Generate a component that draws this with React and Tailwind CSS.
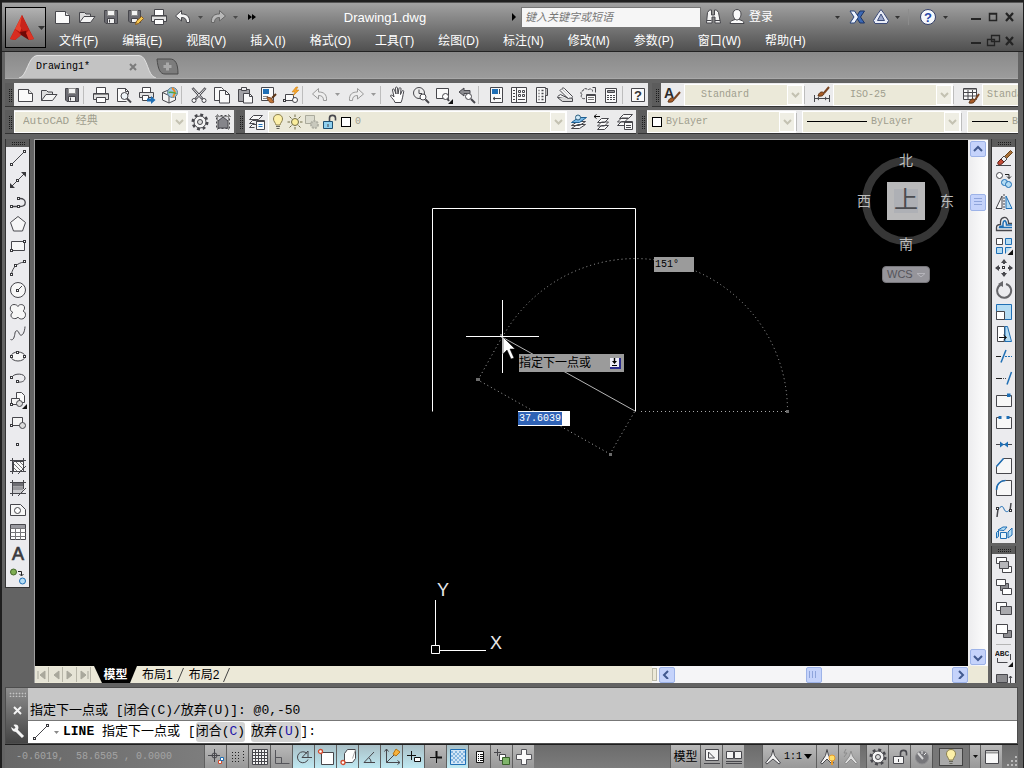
import React, { useState } from "react";

const ink = "#47474c";
const blue = "#1f6fb5";
const pale = "#b5dcf3";

// small square handle used on most draw icons
const Node = ({ x, y, fill = "#fff", stroke = "#38383c" }) => (
  <rect x={x - 1} y={y - 1} width="2" height="2" fill={fill} stroke={stroke} />
);

// every drawing lives in an 18 x 18 box
const drawings = {
  newFile: (
    <>
      <path d="M1.5 3.5h10l4 4v8h-14z" fill="#fafafa" />
      <path d="M11.5 3.5v4h4" fill="#ddd" />
    </>
  ),
  open: (
    <>
      <path d="M1.5 14.5v-10h5l1.5 1.5h4.5v2.5" fill="#ddd" />
      <path d="M1.5 14.5l4.5-6h11l-4.5 6z" fill="#f4f4f4" />
    </>
  ),
  save: (
    <>
      <path d="M2.5 2.5h13v13h-11.5l-1.5-1.5z" fill="#6c6c72" />
      <path d="M5.5 2.5h7v5h-7z" fill="#f4f4f4" stroke="#8d8d8d" />
      <path d="M5.5 10.5h7v5h-7z" fill="#f0f0f0" />
      <path d="M7.5 11.5v3" />
    </>
  ),
  saveAs: (
    <>
      <path d="M2.5 2.5h12v12h-10.5l-1.5-1.5z" fill="#6c6c72" />
      <path d="M5.5 2.5h6v5h-6z" fill="#f4f4f4" stroke="#8d8d8d" />
      <path d="M5.5 10.5h6v4h-6z" fill="#f0f0f0" />
      <path d="M9.5 16.5l1-3.5 5-4.5 2 2-5 5z" fill="#f3c64e" stroke="#8a5a1e" />
    </>
  ),
  print: (
    <>
      <path d="M4.5 7v-5.5h9v5.5" fill="#fff" />
      <path d="M1.5 7.5h15v6h-15z" fill="#e2e2e2" />
      <path d="M2 8.5h14" stroke="#888" />
      <path d="M4.5 11.5h9v5h-9z" fill="#fff" />
    </>
  ),
  preview: (
    <>
      <path d="M11.5 15.5h-9v-13h8l3 3v3" fill="#fafafa" />
      <path d="M10.5 2.5v3h3" />
      <circle cx="9.5" cy="10" r="3.5" fill="#eef3f7" />
      <path d="M12 12.5l4 4" strokeWidth="2" />
    </>
  ),
  publish: (
    <>
      <path d="M4.5 6v-4.5h8v4.5" fill="#fff" />
      <path d="M1.5 6.5h14v5h-14z" fill="#e2e2e2" />
      <path d="M4.5 9.5h6v5h-6z" fill="#fff" />
      <path d="M9 12.5h4v-2.5l4.5 4-4.5 4v-2.5h-4z" fill={blue} stroke="none" />
    </>
  ),
  print3d: (
    <>
      <path d="M1.5 6.5l6-2.5 7 3v7l-6.5 3-6.5-3z" fill="#f4f4f4" />
      <path d="M1.5 6.5l6.5 3v7.5" />
      <circle cx="11.5" cy="6.5" r="5" fill="#9cc8e6" stroke="#5f7f95" />
      <path d="M11 2c3 2 4 5 1 9" stroke="#f08a24" strokeWidth="2" />
      <path d="M7.5 6.5c3-1 5 0 8 1" stroke="#4fa548" strokeWidth="1.5" />
    </>
  ),
  cut: (
    <>
      <path d="M2.5 2l10 11M15.5 2l-10 11" strokeWidth="2.6" />
      <path d="M3 2.500l9 10M15 2.500l-9 10" stroke="#e6e6e8" />
      <circle cx="4" cy="14.5" r="2" fill="#fff" />
      <circle cx="14" cy="14.5" r="2" fill="#fff" />
    </>
  ),
  copy: (
    <>
      <path d="M1.5 1.5h7l2 2v11h-9z" fill="#fafafa" />
      <path d="M6.5 4.5h6l4 4v8.5h-10z" fill="#fafafa" />
      <path d="M12.5 4.5v4h4" />
    </>
  ),
  paste: (
    <>
      <path d="M2.5 3.5h11v12h-11z" fill="#a2a2a6" />
      <path d="M5.5 1.5h5v3h-5z" fill="#eee" />
      <path d="M7.5 7.5h6l3 3v6.5h-9z" fill="#fafafa" />
      <path d="M13.5 7.5v3h3" />
    </>
  ),
  match: (
    <>
      <path d="M2.5 1.5h12v13h-12z" fill="#fafafa" />
      <path d="M4 3h6v5h-6z" fill={blue} stroke="none" />
      <path d="M4 10.5h5M4 12.5h4" stroke="#888" />
      <path d="M8 11l4 1 3 4c-3 2-6 0-7-5z" fill="#c07434" stroke="#7a4420" />
      <path d="M13 12l4-4" stroke="#5b3315" strokeWidth="2" />
    </>
  ),
  block: (
    <>
      <path d="M3.5 8.5h8v6h-8z" fill="#fafafa" />
      <path d="M1 14.5h13" />
      <circle cx="13" cy="14" r="2.5" fill="#fff" />
      <path d="M14 1l-4 5h3l-2 4 6-6h-3l2-3z" fill="#f7a52a" stroke="#c77a10" strokeWidth=".5" />
      <Node x={2.5} y={14.5} />
    </>
  ),
  undo: <path d="M1.5 8l6-5.5v3.5c5 0 8.5 2 8 8.5h-3c0-3.5-1.5-5-5-5v3.5z" fill="#f6f6f6" />,
  redo: <path d="M16.5 8l-6-5.5v3.5c-5 0-8.5 2-8 8.5h3c0-3.5 1.5-5 5-5v3.5z" fill="#b9b9b9" stroke="#666" />,
  undoGrey: <path d="M1.5 8l6-5.5v3.5c5 0 8.5 2 8 8.5h-3c0-3.5-1.5-5-5-5v3.5z" fill="#eee" stroke="#9a9a9a" />,
  redoGrey: <path d="M16.5 8l-6-5.5v3.5c-5 0-8.5 2-8 8.5h3c0-3.5 1.5-5 5-5v3.5z" fill="#eee" stroke="#9a9a9a" />,
  pan: (
    <path
      d="M6 16.5c-1-3-3-4-4.5-6.5 0-1.5 2-1 3.5 1l-1.5-7c0-1.5 1.5-1.5 2 0l1.5 4-.5-6c0-1.3 1.800-1.3 2 0l.5 6 1-5.5c.3-1.2 2-1 2 .3l-.5 5.7 1.5-3.5c.7-1 2-.5 1.700.7-1 4-1 7-2.7 10.8z"
      fill="#fff"
    />
  ),
  zoomRt: (
    <>
      <circle cx="7" cy="7" r="5.5" fill="#eee" />
      <path d="M7 3.5v4h3" />
      <circle cx="11" cy="11" r="3" fill="#fff" />
      <path d="M13.5 13.5l3.5 3.5" strokeWidth="2" />
    </>
  ),
  zoomWin: (
    <>
      <path d="M1.5 2.5h12v10h-12z" fill="#fafafa" />
      <circle cx="10.5" cy="10.5" r="3" fill="#fff" />
      <path d="M12.5 13l1.5 2" strokeWidth="2" />
      <path d="M18 13v5h-5z" fill="#111" stroke="none" />
    </>
  ),
  zoomPrev: (
    <>
      <path d="M1 6l5-4v2.5h6v3h-6v2.5z" fill="#8c8c90" />
      <circle cx="10.5" cy="10.5" r="3" fill="#fff" />
      <path d="M13 13l4 4" strokeWidth="2" />
    </>
  ),
  props: (
    <>
      <path d="M3.5 1.5h12v15h-12z" fill="#fafafa" />
      <path d="M5 3h6v5h-6z" fill={blue} stroke="none" />
      <path d="M12.5 3v5M6 12.5h8M6 12.5l2-1.5M6 12.5l2 1.5" />
    </>
  ),
  center: (
    <>
      <path d="M1.5 1.5h15v15h-15zM6.5 1.5v15" fill="#fafafa" />
      <path d="M3 4.5h2M3 7.5h2M3 10.5h2M3 13.5h2" />
      <path d="M8.5 4.5h2v2h-2zM12.5 4.5h2v2h-2zM8.5 8.5h2v2h-2zM12.5 8.5h2v2h-2zM8 13.5h7" />
    </>
  ),
  palette: (
    <>
      <path d="M3.5 1.5h9v15h-9z" fill="#fafafa" />
      <path d="M12.5 2.5h2v7h-2" fill="#bbb" />
      <path d="M5.5 4.5h1M8.5 4.5h2M5.5 7.5h1M8.5 7.5h2M5.5 10.5h1M8.5 10.5h2M5.5 13.5h1M8.5 13.5h2" strokeWidth="1.5" />
    </>
  ),
  sheets: (
    <>
      <path d="M1.5 11.5l5 4h10v-3l-7-2z" fill="#d8d8d8" />
      <path d="M1.500 10.5l3-2 8 4 3-1L6 2.500l-2 2 8 8" fill="#f4f4f4" />
      <path d="M6 2.500c1-1 2-.5 2.500 0l8 8-1 2" fill="#f4f4f4" />
    </>
  ),
  markup: (
    <>
      <path d="M3 8.5c-2-1-1-4 1-3.5 0-3 4-3 5-1 2-2 5-1 4.5 1.5" strokeDasharray="3 1" />
      <path d="M3 8.5c-2 2 0 5 3 4" strokeDasharray="3 1" />
      <path d="M13.5 1.5h3v5" />
      <path d="M7.5 8.5h9v8h-9z" fill="#fafafa" />
      <path d="M9 11.5h6M9 13.5h6" stroke="#777" />
      <path d="M8 9.5h8" />
    </>
  ),
  calc: (
    <>
      <path d="M3.5 2.5h11v14h-11z" fill="#fafafa" />
      <path d="M5.5 4.5h7v2h-7z" fill="#9a9a9e" />
      <path d="M5 9.5h8M5 11.5h8M5 13.5h8" strokeDasharray="2 1" strokeWidth="1.2" />
    </>
  ),
  help: (
    <>
      <path d="M2.5 2.5h13v13h-13z" fill="#fafafa" />
      <text x="9" y="14" fontSize="13" fontWeight="700" textAnchor="middle" fill="#333" stroke="none" fontFamily="Liberation Sans, sans-serif">?</text>
    </>
  ),
  textStyle: (
    <>
      <text x="0" y="12" fontSize="14" fontWeight="700" fill="#2a2a2c" stroke="none" fontFamily="Liberation Sans, sans-serif">A</text>
      <path d="M4 16c1-4 4-5 6-3 0 3-3 3.5-6 3z" fill="#a65a26" stroke="#5b3315" />
      <path d="M10 13l6-7" stroke="#7a4420" strokeWidth="2" />
    </>
  ),
  dimStyle: (
    <>
      <path d="M1.5 9v7M16.5 9v7M2 12.5h14" />
      <path d="M4 12.5l2-2v4zM14 12.5l-2-2v4z" fill={ink} stroke="none" />
      <path d="M5 10c1-4 4-5 6-3 0 3-3 3.5-6 3z" fill="#a65a26" stroke="#5b3315" />
      <path d="M11 7l5-6" stroke="#7a4420" strokeWidth="2" />
    </>
  ),
  tableStyle: (
    <>
      <path d="M1.5 2.5h13v11h-13zM1.5 6.5h13M1.5 10h13M6 3v11M10.5 3v11" fill="#fafafa" />
      <path d="M2 3.5h12" stroke="#999" />
      <path d="M7 17c1-4 4-5 6-3 0 3-3 3.5-6 3z" fill="#a65a26" stroke="#5b3315" />
      <path d="M13 14l4-6" stroke="#7a4420" strokeWidth="2" />
    </>
  ),
  gear: (
    <>
      <circle cx="9" cy="9" r="7" strokeDasharray="2.8 2.7" strokeWidth="3" />
      <circle cx="9" cy="9" r="6" fill="#f4f4f4" />
      <circle cx="9" cy="9" r="2.5" fill="#dcdcdc" />
    </>
  ),
  space: (
    <>
      <path d="M2.5 2.5h13v13h-13z" fill="#d9d9dd" strokeDasharray="2 2" />
      <path d="M4 15v-7l5-4 5 4v7z" fill="#85858a" />
      <path d="M1 3.5h16M3.5 1v16M14.5 1v16" stroke="#8b8b8b" />
    </>
  ),
  layers: (
    <>
      <path d="M1.5 14.5h5M1.5 14.5l3-3h4M1.5 10.5h5M1.5 10.5l3-3h4M1.5 6.5h9l4-4h-9z" fill="#fafafa" />
      <path d="M8.5 7.5h8v9h-8z" fill="#fafafa" />
      <path d="M9 8.5h7" />
      <path d="M10.5 11.5h4M10.5 13.5h4" stroke={blue} />
    </>
  ),
  bulb: (
    <>
      <path d="M9 1.5c-3 0-4.5 2-4.5 4.5s2 3.5 2.5 6h4c.5-2.5 2.5-3.5 2.5-6s-1.5-4.5-4.5-4.5z" fill="#fdf0a8" stroke="#8c8150" />
      <path d="M7 13.5h4M7.5 15.5h3" stroke="#66665c" />
    </>
  ),
  sun: (
    <>
      <circle cx="9" cy="9" r="3.5" fill="#fbee9c" stroke="#6f6a44" />
      <path d="M9 1.5v2.5M9 14v2.5M1.5 9h2.5M14 9h2.5M3.5 3.5l2 2M12.5 12.5l2 2M14.5 3.5l-2 2M5.5 12.5l-2 2" stroke="#6f6a44" />
    </>
  ),
  freeze: (
    <>
      <path d="M2.5 2.5h9v8h-9z" fill="#dcdccf" stroke="#aaaa9c" />
      <circle cx="11.5" cy="11.5" r="3.5" fill="#c9c9bd" stroke="#b0b0a5" strokeDasharray="2 1" strokeWidth="2" />
    </>
  ),
  lockBlue: (
    <>
      <path d="M9.5 8v-3c0-3.5 6-3.5 6 0v2.5" strokeWidth="1.6" />
      <path d="M3.5 8.5h9v7h-9z" fill="#8fd0ee" stroke="#1d4f72" />
      <path d="M8 11v3" />
    </>
  ),
  lockOpen: (
    <>
      <path d="M9.5 8v-3c0-3.5 6-3.5 6 0v2.5" strokeWidth="1.6" />
      <path d="M2.5 8.5h10v7h-10z" fill="#f4f4f4" />
      <path d="M7.5 11v3" />
    </>
  ),
  layerIso: (
    <>
      <path d="M1.5 15.5h8l6-4h-8zM1.5 12.5h8l6-4h-8z" fill="#fafafa" />
      <path d="M1.5 9.5h8l7-5h-8z" fill="#7ab9e6" stroke="#1d5f93" />
      <circle cx="8" cy="4.5" r="2.5" fill="#cfe8f7" stroke="#2e5f80" />
    </>
  ),
  layerPrev: (
    <>
      <path d="M4.5 16.5h7l4-4h-7zM4.5 13h7l4-4h-7zM4.5 9.5h7l4-4h-7z" fill="#fafafa" />
      <path d="M1 3.5h6M1 3.5l2.5-2M1 3.5l2.5 2" stroke="#111" />
    </>
  ),
  layerState: (
    <>
      <path d="M1.5 12.5h7l4-4h-7zM1.5 9h7l4-4h-7zM3.5 5.5h9l4-4h-9z" fill="#fafafa" />
      <path d="M8.5 8.5h8v8h-8z" fill="#fafafa" />
      <path d="M9 9.5h7M10 12.5h5M10 14.5h5" />
    </>
  ),

  // draw palette
  line: (
    <>
      <path d="M3 15L15 3" />
      <Node x={2.5} y={15.5} />
      <Node x={15.5} y={2.5} />
    </>
  ),
  xline: (
    <>
      <path d="M2 16L16 2" />
      <path d="M1 17v-5l5 5zM17 1v5l-5-5z" fill="#38383c" stroke="none" />
      <Node x={8.5} y={9.5} />
    </>
  ),
  pline: (
    <>
      <path d="M2 13.5h9c7 0 7-8 0-8" strokeWidth="1.3" />
      <Node x={2.5} y={13.5} />
      <Node x={9.5} y={13.5} />
      <Node x={9.5} y={5.5} />
    </>
  ),
  polygon: <path d="M9 1.5l7.5 6-3 8.5h-9l-3-8.5z" fill="#f7f7f7" />,
  rectangle: (
    <>
      <path d="M2.5 4.5h13v9h-13z" fill="#f7f7f7" />
      <Node x={2.5} y={13.5} />
      <Node x={15.5} y={4.5} />
    </>
  ),
  arc: (
    <>
      <path d="M2.5 15c1-6 5-11 13-12" />
      <Node x={2.5} y={15.5} />
      <Node x={6.5} y={6.5} />
      <Node x={15.5} y={2.5} />
    </>
  ),
  circle: (
    <>
      <circle cx="9" cy="9" r="7.5" fill="#f7f7f7" />
      <path d="M9 9l4-4" />
      <Node x={8.5} y={9.5} />
    </>
  ),
  cloud: (
    <path
      d="M9 3.5c1-3 7-2.5 6.5 1.5 0 1.5-.5 2-1.5 3 4 1.5 3 8-1.5 8-2 0-3-1-3.5-2-2 3-7.5 1.5-7-2 .2-1.5 1-2 2-2.5-4-1.5-3.5-8 1-8 2 0 3.5 1 4 2z"
      fill="#f7f7f7"
    />
  ),
  spline: <path d="M1.5 14.5c3 1.500 4-3 4.5-6.500.5-3 3-3 4 0 1.5 4.500 5.500 2 6-6.500" />,
  ellipse: (
    <>
      <ellipse cx="9" cy="9.5" rx="7" ry="4.5" fill="#f7f7f7" />
      <Node x={2.5} y={9.5} />
      <Node x={15.5} y={9.5} />
      <Node x={8.5} y={5.5} />
    </>
  ),
  ellipseArc: (
    <>
      <path d="M3 8c2-4 13-4 13 1 0 3.5-4 4.5-7 4" />
      <Node x={2.5} y={8.5} />
      <Node x={8.5} y={12.5} />
    </>
  ),
  insert: (
    <>
      <path d="M7.5 1.5h5l3 3v7h-8z" fill="#fafafa" />
      <path d="M2.5 7.5h8v6h-8z" fill="#f4f4f4" />
      <circle cx="10.5" cy="12.5" r="3" fill="#ddd" />
      <Node x={2.5} y={13.5} />
      <path d="M18 13v5h-5z" fill="#111" stroke="none" />
    </>
  ),
  makeBlock: (
    <>
      <path d="M3.5 4.5h10v8h-10z" fill="#f4f4f4" />
      <circle cx="13.5" cy="12.5" r="3" fill="#ddd" />
      <Node x={2.5} y={12.5} />
    </>
  ),
  point: <Node x={8.5} y={9.5} />,
  hatch: (
    <>
      <path d="M4.5 4.5h10v10h-10z" fill="#fafafa" />
      <path d="M5 11l4 4M5 7l7 7M7 5l7 7M11 5l3 3" stroke="#777" />
      <path d="M1 3.5h16M3.5 1v16M1 14.5h16M14.5 1v9M9 17l8-8" />
    </>
  ),
  gradient: (
    <>
      <path d="M4 4h10v3.5h-10z" fill="#6e6e73" stroke="none" />
      <path d="M4 7.5h10v3.5h-10z" fill="#98989c" stroke="none" />
      <path d="M4 11h10v3.5h-10z" fill="#c9c9cc" stroke="none" />
      <path d="M1 3.5h16M3.5 1v16M1 14.5h16M14.5 1v9M9 17l8-8" />
    </>
  ),
  region: (
    <>
      <path d="M1.5 3.5h10l5 5v6h-15z" fill="#f7f7f7" />
      <circle cx="8.5" cy="9.5" r="3" fill="#fff" />
    </>
  ),
  table: (
    <>
      <path d="M1.5 1.5h15v15h-15z" fill="#fff" />
      <path d="M2 2h14v3h-14z" fill="#9a9aa0" stroke="none" />
      <path d="M1.5 5.5h15M1.5 9.5h15M1.5 13.5h15M6.5 5v12M11.5 5v12" stroke="#77777b" />
    </>
  ),
  mtext: (
    <text x="9" y="15" fontSize="18" textAnchor="middle" fill="#3a3a3e" stroke="#3a3a3e" strokeWidth=".7" fontFamily="Liberation Sans, sans-serif">A</text>
  ),
  addSelected: (
    <>
      <circle cx="4.5" cy="5" r="3" fill="#7fae52" stroke="#44652a" />
      <path d="M9 4.5h3.5v4M10.5 7l2 2 2-2" stroke="#222" />
      <circle cx="13.5" cy="14" r="3" fill={pale} stroke={blue} />
    </>
  ),

  // modify palette
  erase: (
    <>
      <path d="M1 16.5h15" />
      <path d="M9 8l6.500-6.500 2 2L11 10z" fill="#a9713a" stroke="#694318" />
      <path d="M6 10l3-3 3 3-3 3z" fill="#eee" />
      <path d="M3 13l3-3 3 3-3 2.500c-2 1-4 0-3-2.500z" fill="#c44b36" stroke="#5d2219" />
    </>
  ),
  copyObj: (
    <>
      <circle cx="4.5" cy="4.5" r="3" fill="#fff" />
      <path d="M10 3.5h4v4M12 5.5l2 2 2-2" stroke="#222" />
      <circle cx="9.5" cy="11.5" r="3" fill={pale} stroke={blue} />
      <circle cx="13.5" cy="13.5" r="3" fill={pale} stroke={blue} />
    </>
  ),
  mirror: (
    <>
      <path d="M7 3v12.5h-6z" fill="#f7f7f7" />
      <path d="M11 3v12.5h6z" fill={pale} stroke={blue} />
      <path d="M9 1v16" strokeDasharray="2 1" />
    </>
  ),
  offset: (
    <>
      <path d="M17 15.5h-15.5v-3c0-2 2-3 4-3-1-9 8-9 8-2v1h3.500" strokeWidth="1.3" />
      <path d="M17 12.5h-12.500c0-1 1-1.5 3.500-1.500-.5-7 3.500-6.500 3.500-1h5.500" stroke={blue} strokeWidth="1.5" />
    </>
  ),
  array: (
    <>
      <path d="M1.5 1.5h6v6h-6z" fill="#fff" />
      <path d="M10.5 1.5h6v6h-6zM1.5 10.5h6v6h-6zM10.5 16.5v-6h6" fill={pale} stroke={blue} />
      <path d="M18 12.5v5.500h-5.500z" fill="#111" stroke="none" />
    </>
  ),
  move: (
    <>
      <path d="M9 1v4M9 13v4M1 9h4M13 9h4" strokeWidth="2" />
      <path d="M9 0l3 4h-6zM9 18l3-4h-6zM0 9l4-3v6zM18 9l-4-3v6z" fill={ink} stroke="none" />
      <Node x={8.5} y={8.5} />
    </>
  ),
  rotate: (
    <>
      <path d="M6 3.500a7 7 0 1 0 5-.5" stroke="#66666a" strokeWidth="2" />
      <path d="M8 0v6l-5-3z" fill="#66666a" stroke="none" />
    </>
  ),
  scale: (
    <>
      <path d="M1.5 1.5h15v15h-15z" fill={pale} stroke={blue} />
      <path d="M1.5 8.5h8v8h-8z" fill="#fff" />
    </>
  ),
  stretch: (
    <>
      <path d="M2.5 1.5h7v15h-7z" fill="#fff" />
      <path d="M10 1.5h2.5l4 15h-6.5z" fill={pale} stroke={blue} />
      <path d="M4 12.5h7M8.5 10l3 2.5-3 2.5" stroke="#111" />
    </>
  ),
  trim: (
    <>
      <path d="M1 9.5h5" stroke="#222" />
      <path d="M6 15.5L11 3" stroke={blue} strokeWidth="1.5" />
      <path d="M10 9.5h7" stroke={blue} strokeDasharray="2 1" />
    </>
  ),
  extend: (
    <>
      <path d="M1 9.5h6" stroke="#222" />
      <path d="M8 9.5h4" strokeDasharray="1 1" />
      <path d="M12 15.5L16.5 3" stroke={blue} strokeWidth="1.5" />
    </>
  ),
  breakPoint: (
    <>
      <path d="M1.5 4.5v11h15v-11z" fill="#f7f7f7" />
      <path d="M12 2.5h3.5v3.5h-3.5z" fill={blue} stroke="none" />
    </>
  ),
  breakObj: (
    <>
      <path d="M4 4.5h-2.5v11h15v-11h-3" fill="#f7f7f7" />
      <path d="M3.5 3h3v3h-3zM11.5 3h3v3h-3z" fill={blue} stroke="none" />
    </>
  ),
  join: (
    <>
      <path d="M1 9.5h16" />
      <path d="M5 6.5l4 3-4 3zM13 6.5l-4 3 4 3z" fill={blue} stroke="none" />
    </>
  ),
  chamfer: (
    <>
      <path d="M8.5 1.5h8v15h-15v-7z" fill="#f7f7f7" />
      <path d="M1.5 9.5l7-8" stroke={blue} strokeWidth="1.5" />
    </>
  ),
  fillet: (
    <>
      <path d="M1.5 11c0-6 4-9.5 9-9.5h6v15h-15z" fill="#f7f7f7" />
      <path d="M1.5 11c0-6 4-9.5 9-9.5" stroke={blue} strokeWidth="1.5" />
    </>
  ),
  blend: (
    <>
      <path d="M2 16l1-8M16 2l-1 8" strokeWidth="1.5" />
      <path d="M3 9c3-5 5-4 6-1s4 4 6 0" stroke={blue} />
      <Node x={2.5} y={7.5} />
      <Node x={15.5} y={9.5} />
    </>
  ),
  explode: (
    <>
      <path d="M5.5 9.5h6v6h-6z" fill="#e6f4fc" stroke={blue} />
      <path d="M3 7l5-3h4l-3 3.5zM13 9l4-4v7l-4 3zM1.5 9.5l2-2v6l-2 1.5z" fill={pale} stroke={blue} />
    </>
  ),
  orderFront: (
    <>
      <path d="M1.5 1.5h10v6h-10zM7.5 10.5h9v6h-9z" fill="#fff" />
      <path d="M4.5 5.5h9v7h-9z" fill="#b6b6ba" />
    </>
  ),
  orderBack: (
    <>
      <path d="M5.5 5.5h8v7h-8z" fill="#8c8c90" />
      <path d="M1.5 1.5h9v6h-9zM7.5 10.5h9v6h-9z" fill="#fff" />
    </>
  ),
  orderAbove: (
    <>
      <path d="M1.5 2.5h10v8h-10z" fill="#fff" />
      <path d="M5.5 6.5h11v8h-11z" fill="#a9a9ad" />
    </>
  ),
  orderUnder: (
    <>
      <path d="M8.5 8.5h8v7h-8z" fill="#8c8c90" />
      <path d="M1.5 2.5h11v9h-11z" fill="#fff" />
    </>
  ),
  abc: (
    <>
      <text x="0" y="7" fontSize="8" fontWeight="700" fill="#222" stroke="none" fontFamily="Liberation Mono, monospace">ABC</text>
      <path d="M2.5 9v4.500h10M15.5 5v6" />
      <path d="M18 13v5h-5z" fill="#111" stroke="none" />
    </>
  ),
  hatchBack: (
    <>
      <path d="M1.5 3.5h11v8h-11z" fill="#8c8c90" />
      <path d="M15.5 5v10M14 7l1.5-2 1.5 2M10 14v3M13 14v3" />
    </>
  ),

  // status bar
  infer: (
    <>
      <path d="M1 7.5h12M7.5 1v13" />
      <circle cx="7.5" cy="7.5" r="2.5" />
      <path d="M11.5 12.5h3v3h-3z" fill="#fff" stroke="#d24a2c" />
      <path d="M13.5 9.5h3v3h-3z" fill="#fff" stroke={blue} />
    </>
  ),
  snap: <path d="M3 4.5h9M3 7.5h9M3 10.5h9M3 13.5h9M14.5 3v7M14.5 12v2" strokeDasharray="1 2" stroke="#222" />,
  grid: (
    <>
      <path d="M1.5 1.5h15v15h-15z" fill="#f4f4f4" />
      <path d="M4.5 1v16M7.5 1v16M10.5 1v16M13.5 1v16M1 4.5h16M1 7.5h16M1 10.5h16M1 13.5h16" />
    </>
  ),
  ortho: <path d="M2.5 2v13.5h14M2.5 9.5h6v6" stroke="#55555a" />,
  polar: (
    <>
      <path d="M12 5.500a5.500 5.500 0 1 0 1 6" />
      <path d="M7 9.500L13 3v6.500zM7 9.500h10" />
    </>
  ),
  osnap: (
    <>
      <path d="M4.5 4.5h12v12h-12z" fill="#fff" />
      <circle cx="3.5" cy="3.5" r="2" fill="#fff" stroke="#d24a2c" strokeWidth="1.3" />
    </>
  ),
  osnap3d: (
    <>
      <path d="M5.5 5.5l3-4h8v9l-3 4h-8z" fill="#fff" />
      <path d="M13.5 10.500l3-9" stroke="#aaa" />
      <circle cx="4" cy="14.5" r="2" fill="#fff" stroke="#d24a2c" strokeWidth="1.3" />
    </>
  ),
  otrack: <path d="M14 14.5h-11L13 4M8 10c1.500 1 2 2.500 2 4.500" />,
  ducs: (
    <>
      <path d="M3.5 1v13.5h13M3.5 14.5l9-9" />
      <path d="M1.5 3.5l2-2.5 2 2.5M14.5 12.5l2.5 2-2.5 2" />
      <path d="M10 6l3-5 4 3-4 4z" fill="#f7b23c" stroke="#b9740f" />
    </>
  ),
  dyn: (
    <>
      <path d="M2 7.5h9M6.5 3v9" stroke="#111" />
      <path d="M9.5 9.5h6v4h-6z" fill="#fff" stroke="#111" />
    </>
  ),
  lwt: (
    <>
      <path d="M3 9.5h6M9.5 9v6" stroke="#111" />
      <path d="M9 9.500h6M9.500 3v7" stroke="#111" strokeWidth="2" />
    </>
  ),
  tpy: (
    <>
      <path d="M1.5 1.500h15v15h-15z" fill="#d3e6f6" stroke={blue} />
      <path d="M2 4h14M2 8h14M2 12h14" stroke="#86b6df" strokeDasharray="2 2" strokeWidth="2" />
      <path d="M4 6h12M4 10h12M4 14h12" stroke="#86b6df" strokeDasharray="2 2" strokeWidth="2" />
    </>
  ),
  qp: (
    <>
      <path d="M5.5 3.5h7v11h-7z" fill="#fff" stroke="#111" />
      <path d="M7 6.5h1M9 6.500h3M7 8.5h1M9 8.500h3M7 10.5h1M9 10.500h3M7 12.500h1M9 12.500h3" stroke="#111" />
    </>
  ),
  sc: (
    <>
      <path d="M1 4.5h7M4.5 1v7" />
      <path d="M6.5 6.5h6v6h-6z" fill="#fff" />
      <path d="M9.5 9.5h7v7h-7z" fill="#7fb56a" stroke="#39602a" />
    </>
  ),
  am: <path d="M6.5 1.5h5v5h5v5h-5v5h-5v-5h-5v-5h5z" fill="#fafafa" stroke="#55555a" />,
  modelView: (
    <>
      <path d="M2.5 1.5h13v11h-13z" fill="#f4f4f4" />
      <path d="M5.5 4v6h6zM1 15.5h16" />
    </>
  ),
  quickView: (
    <>
      <path d="M1.5 3.5h7v7h-7zM9.5 3.5h7v7h-7z" fill="#f4f4f4" />
      <path d="M1 13.5h16M1 15.5h16" />
    </>
  ),
  anno: <path d="M9 1.5l1.5 6 6 7.5-1.5 1-6-5-6 5-1.5-1 6-7.5z" fill="#f4f4f4" />,
  annoVis: (
    <>
      <path d="M8 1.5l1.5 6 5 7.5-1.5 1-5-5-5 5-1.5-1 5-7.5z" fill="#f4f4f4" />
      <circle cx="13" cy="10" r="3" fill="#ffe06b" stroke="#e79a2a" />
      <path d="M13 13v4" stroke="#e79a2a" strokeWidth="2" />
    </>
  ),
  annoAuto: (
    <>
      <path d="M10 3l1.5 5 5 7-1.5 1-5-5-5 5-1.5-1 5-7z" fill="#ddd" stroke="#8c8c8c" />
      <path d="M5 1l-2 4h3l-3 4" stroke="#8c8c8c" />
    </>
  ),
  accel: (
    <>
      <circle cx="9" cy="9.5" r="6.5" fill="#77777b" stroke="#8d8d90" />
      <path d="M5 5l5 6" stroke="#d8d8d8" strokeWidth="2" />
      <path d="M9 3v3M13 5l-2 2" stroke="#eee" />
    </>
  ),
  clean: (
    <>
      <path d="M2.5 2.5h13v13h-13z" fill="#f8f8f8" />
      <path d="M3 4.5h12" stroke="#999" strokeWidth="2" />
    </>
  ),

  // title bar
  find: (
    <>
      <path d="M3.5 4.5l2-2.5h2v5h3v-5h2l2 2.5 2 10.5h-5.5v-6h-3v6h-5.500z" fill="#f4f4f4" />
      <path d="M2.5 12.5h5M11 12.5h5" />
    </>
  ),
  user: (
    <>
      <path d="M2 15.5c0-3 3-3 5-4h4c2 1 5 1 5 4z" fill="#fafafa" />
      <path d="M9 1.5c-2.5 0-4 2-4 4.5 0 3 2 6 4 6s4-3 4-6c0-2.5-1.5-4.5-4-4.5z" fill="#fafafa" />
    </>
  ),
  exchange: (
    <>
      <path d="M12 3h4.500l-4 6 4 6H12l-4-6z" fill="#3c69b5" stroke="#1d3566" />
      <path d="M2 3h4.500l4 6-4 6H2l4-6z" fill="#eef4ff" stroke="#29457c" />
    </>
  ),
  cloud360: (
    <>
      <path d="M9 1.5l3 4 4.5 7-1.5 3h-12l-1.5-3 4.5-7z" fill="#e9edf8" stroke="#3c4b78" />
      <path d="M9 6l3.5 6.5h-7z" fill="#9aa7cc" stroke="#3c4b78" />
    </>
  ),
  helpRound: (
    <>
      <circle cx="9" cy="9" r="7.5" fill="#f6f8fc" stroke="#34406a" />
      <text x="9" y="14" fontSize="13" fontWeight="700" textAnchor="middle" fill="#2746a6" stroke="none" fontFamily="Liberation Sans, sans-serif">?</text>
    </>
  ),
  minimize: <path d="M4 11h10" stroke="#242424" strokeWidth="2" />,
  maximize: <path d="M5.5 5.5h7v7h-7zM5 6h8" stroke="#242424" strokeWidth="1.5" />,
  restore: <path d="M7.5 3.5h8v6h-8zM3.5 7.5h7v6h-7z" stroke="#242424" strokeWidth="1.3" />,
  close: <path d="M5 5l7 8M12 5l-7 8" stroke="#242424" strokeWidth="2.2" />,
};

const Icon = ({ name }) => (
  <svg width="18" height="18" viewBox="0 0 18 18" fill="none" stroke={ink} className="shrink-0" aria-hidden="true">
    {drawings[name]}
  </svg>
);

const IconButton = ({ icon, label, className = "w-[23px]" }) => (
  <button type="button" aria-label={label} title={label} className={`flex h-full shrink-0 items-center justify-center ${className}`}>
    <Icon name={icon} />
  </button>
);

const Caret = ({ label, className = "w-[13px]", color = "#4a4a4a" }) => (
  <button type="button" aria-label={label} className={`flex h-full shrink-0 items-center justify-center ${className}`}>
    <svg width="5" height="3" viewBox="0 0 5 3" fill={color} aria-hidden="true">
      <path d="M0 0h5l-2.5 3z" />
    </svg>
  </button>
);

const Grip = ({ vertical = false }) => (
  <div className={`flex shrink-0 items-center justify-center bg-[#5c5c5c] ${vertical ? "h-2" : "w-[9px]"}`}>
    <div
      className={`bg-[linear-gradient(#5c5c5c_1px,transparent_1px),linear-gradient(90deg,#5c5c5c_1px,#1c1c1c_1px)] bg-[length:2px_2px] ${
        vertical ? "h-[4px] w-[14px]" : "h-[14px] w-[4px]"
      }`}
    />
  </div>
);

const Divider = () => <div className="mx-auto h-[18px] w-[6px] shrink-0 self-center border-l border-[#bdbdbd]" />;

const Combo = ({ label, value, width, lead, pad = "pl-2", size = "text-[10px]" }) => (
  <div className={`relative flex h-[22px] shrink-0 items-center self-center border border-white bg-[#ebe9d9] ${width}`}>
    {lead}
    <select
      aria-label={label}
      defaultValue={value}
      className={`h-full min-w-0 flex-1 appearance-none bg-transparent font-['Liberation_Mono','Noto_Sans_CJK_SC',monospace] text-[#9f9e8e] outline-none ${pad} ${size}`}
    >
      <option>{value}</option>
    </select>
    <span className="pointer-events-none absolute top-0 right-0 flex h-full w-4 items-center justify-center border border-white bg-[#efeee4]">
      <svg width="9" height="6" viewBox="0 0 9 6" fill="none" stroke="#c4c2b2" strokeWidth="2" aria-hidden="true">
        <path d="M1 1l3.5 3.5L8 1" />
      </svg>
    </span>
  </div>
);

const Swatch = () => <span className="ml-1 h-[10px] w-[10px] shrink-0 border border-black bg-white" />;

const standardGroups = [
  [["newFile", "新建"], ["open", "打开"], ["save", "保存"]],
  [["print", "打印"], ["preview", "打印预览"], ["publish", "发布"], ["print3d", "三维打印"]],
  [["cut", "剪切"], ["copy", "复制"], ["paste", "粘贴"], ["match", "特性匹配"], ["block", "块编辑器"]],
];
const viewGroups = [
  [["pan", "实时平移"], ["zoomRt", "实时缩放"], ["zoomWin", "窗口缩放"], ["zoomPrev", "缩放上一个"]],
  [["props", "特性"], ["center", "设计中心"], ["palette", "工具选项板"], ["sheets", "图纸集"], ["markup", "标记集"], ["calc", "快速计算器"]],
];
const drawTools = [
  ["line", "直线"], ["xline", "构造线"], ["pline", "多段线"], ["polygon", "多边形"], ["rectangle", "矩形"],
  ["arc", "圆弧"], ["circle", "圆"], ["cloud", "修订云线"], ["spline", "样条曲线"], ["ellipse", "椭圆"],
  ["ellipseArc", "椭圆弧"], ["insert", "插入块"], ["makeBlock", "创建块"], ["point", "点"], ["hatch", "图案填充"],
  ["gradient", "渐变色"], ["region", "面域"], ["table", "表格"], ["mtext", "多行文字"], ["addSelected", "添加选定对象"],
];
const modifyTools = [
  ["erase", "删除"], ["copyObj", "复制"], ["mirror", "镜像"], ["offset", "偏移"], ["array", "阵列"], ["move", "移动"],
  ["rotate", "旋转"], ["scale", "缩放"], ["stretch", "拉伸"], ["trim", "修剪"], ["extend", "延伸"], ["breakPoint", "打断于点"],
  ["breakObj", "打断"], ["join", "合并"], ["chamfer", "倒角"], ["fillet", "圆角"], ["blend", "光顺曲线"], ["explode", "分解"],
];
const orderTools = [["orderFront", "前置"], ["orderBack", "后置"], ["orderAbove", "置于对象之上"], ["orderUnder", "置于对象之下"]];
const menus = [
  "文件(F)", "编辑(E)", "视图(V)", "插入(I)", "格式(O)", "工具(T)",
  "绘图(D)", "标注(N)", "修改(M)", "参数(P)", "窗口(W)", "帮助(H)",
];
const toggles = [
  ["infer", "推断约束"], ["snap", "捕捉模式"], ["grid", "栅格显示"], ["ortho", "正交模式"], ["polar", "极轴追踪", true],
  ["osnap", "对象捕捉", true], ["osnap3d", "三维对象捕捉", true], ["otrack", "对象捕捉追踪", true], ["ducs", "动态 UCS", true],
  ["dyn", "动态输入", true], ["lwt", "线宽"], ["tpy", "透明度", true], ["qp", "快捷特性"], ["sc", "选择循环"], ["am", "注释监视器"],
];

const TitleBar = () => (
  <header className="flex h-[50px] shrink-0 border-t border-b border-t-[#555] border-b-[#222] bg-gradient-to-b from-[#a2a2a2] to-[#505050] pr-[5px] pl-[3px]">
    <button
      type="button"
      aria-label="应用程序菜单"
      className="mt-1 flex h-[41px] w-[41px] shrink-0 items-center gap-1 border border-black bg-gradient-to-b from-[#b2b2b2] to-[#696969] pl-1"
    >
      <svg width="24" height="26" viewBox="0 0 24 26" aria-hidden="true">
        <path d="M12 0L0 24l5 1 5-4 2-4 4 1 3 7 5-1z" fill="#b5140e" />
        <path d="M12 0L5 14l5 3 2-5z" fill="#e8432e" />
        <path d="M12 0l7 15-6 1-3-5z" fill="#c8241a" />
        <path d="M5 14L0 24l5 1 6-5z" fill="#d92d20" />
        <path d="M10 17l6-1 3 9-8-5z" fill="#6f0806" />
        <path d="M19 15l5 9-5 1-3-7z" fill="#de3425" />
      </svg>
      <svg width="7" height="4" viewBox="0 0 7 4" fill="#333" aria-hidden="true">
        <path d="M0 0h7L3.5 4z" />
      </svg>
    </button>

    <div className="flex min-w-0 flex-1 flex-col">
      <div className="mt-px flex h-[27px] items-center pl-[5px] text-xs text-white">
        <IconButton icon="newFile" label="新建" className="w-6" />
        <IconButton icon="open" label="打开" className="w-6" />
        <IconButton icon="save" label="保存" className="w-6" />
        <IconButton icon="saveAs" label="另存为" className="w-6" />
        <IconButton icon="print" label="打印" className="w-6" />
        <IconButton icon="undo" label="放弃" className="w-6" />
        <Caret label="放弃列表" className="w-[11px]" />
        <IconButton icon="redo" label="重做" className="w-6" />
        <Caret label="重做列表" className="w-[11px]" />
        <button type="button" aria-label="更多" className="flex h-full w-[21px] items-center justify-center">
          <svg width="8" height="6" viewBox="0 0 8 6" aria-hidden="true">
            <path d="M0 0l4 3-4 3zM4 0l4 3-4 3z" />
          </svg>
        </button>
        <h1 className="min-w-0 flex-1 truncate text-center text-[13px]">Drawing1.dwg</h1>
        <svg width="12" height="8" viewBox="0 0 12 8" className="shrink-0" aria-hidden="true">
          <path d="M4 0l4 4-4 4z" />
        </svg>
        <input
          type="text"
          aria-label="搜索"
          placeholder="键入关键字或短语"
          className="ml-px h-[21px] w-[180px] shrink-0 border border-[#777] bg-[#f6f6f6] px-[3px] text-[11px] text-black italic outline-none placeholder:text-[#777]"
        />
        <IconButton icon="find" label="查找" className="w-6" />
        <IconButton icon="user" label="用户" className="w-6" />
        <button type="button" className="shrink-0">登录</button>
        <Caret label="登录菜单" className="ml-[58px] w-3" color="#333" />
        <IconButton icon="exchange" label="Exchange" className="ml-[2px] w-6" />
        <IconButton icon="cloud360" label="Autodesk 360" className="w-6" />
        <Caret label="360 菜单" className="w-2" color="#333" />
        <span className="mx-[7px] h-4 w-px shrink-0 bg-[#8c8c8c]" />
        <IconButton icon="helpRound" label="帮助" className="w-6" />
        <Caret label="帮助菜单" className="mr-[17px] w-[10px]" color="#333" />
        <IconButton icon="minimize" label="最小化" className="w-[17px]" />
        <IconButton icon="maximize" label="最大化" className="w-[17px]" />
        <IconButton icon="close" label="关闭" className="w-[17px]" />
      </div>
      <nav className="flex h-[21px] items-center text-xs text-white">
        <div className="flex flex-1 gap-6 pl-[13px] whitespace-nowrap">
          {menus.map((menu) => (
            <button key={menu} type="button">{menu}</button>
          ))}
        </div>
        <IconButton icon="minimize" label="最小化图形" className="w-[17px]" />
        <IconButton icon="restore" label="还原图形" className="w-[17px]" />
        <IconButton icon="close" label="关闭图形" className="w-[17px]" />
      </nav>
    </div>
  </header>
);

const FileTabs = () => (
  <div className="flex h-[27px] shrink-0 items-end border-b border-[#a9a9a9] bg-gradient-to-b from-[#8a8a8a] to-[#9c9c9c] pl-[14px]">
    <div className="relative flex h-[23px] w-[137px] items-center">
      <svg width="137" height="23" viewBox="0 0 137 23" className="absolute inset-0" aria-hidden="true">
        <path d="M0 23C8 22 9 1 18 .5h102c9 0 8 21 17 22.5z" fill="#c3c3c3" />
        <path d="M0 23C8 22 9 1 18 .5h102c9 0 8 21 17 22.5" fill="none" stroke="#e0e0e0" />
      </svg>
      <button type="button" className="relative flex-1 pl-[17px] text-left font-['Liberation_Mono',monospace] text-[10px] text-black">
        Drawing1*
      </button>
      <button type="button" aria-label="关闭 Drawing1" className="relative mr-[19px]">
        <svg width="8" height="8" viewBox="0 0 8 8" stroke="#7c7c7c" strokeWidth="2" aria-hidden="true">
          <path d="M1 1l6 6M7 1L1 7" />
        </svg>
      </button>
    </div>
    <button type="button" aria-label="新图形" className="mb-[3px]">
      <svg width="23" height="17" viewBox="0 0 23 17" aria-hidden="true">
        <path d="M1 1h13c5 0 8 4 8 15H9c-5 0-7-5-8-15z" fill="#7c7c7c" stroke="#4b4b4b" />
        <path d="M11.5 4.5v8M7.5 8.5h8" stroke="#a9a9a9" strokeWidth="3" />
      </svg>
    </button>
  </div>
);

const bar = "flex h-6 shrink-0 bg-[#ebebec] border-b border-[#333]";

const Toolbars = () => (
  <>
    <div className="mt-1 flex h-6 shrink-0 gap-1 overflow-hidden">
      <div className={bar}>
        <Grip />
        {standardGroups.map((group, i) => (
          <React.Fragment key={i}>
            {group.map(([icon, label]) => (
              <IconButton key={icon} icon={icon} label={label} />
            ))}
            <Divider />
          </React.Fragment>
        ))}
        <IconButton icon="undoGrey" label="放弃" />
        <Caret label="放弃列表" color="#999" />
        <IconButton icon="redoGrey" label="重做" />
        <Caret label="重做列表" color="#999" />
        <Divider />
        {viewGroups.map((group, i) => (
          <React.Fragment key={i}>
            {group.map(([icon, label]) => (
              <IconButton key={icon} icon={icon} label={label} />
            ))}
            <Divider />
          </React.Fragment>
        ))}
        <IconButton icon="help" label="帮助" className="w-5" />
      </div>
      <div className={`${bar} flex-1`}>
        <Grip />
        <IconButton icon="textStyle" label="文字样式" />
        <Combo label="文字样式" value="Standard" width="w-[120px]" pad="pl-4" />
        <Divider />
        <IconButton icon="dimStyle" label="标注样式" />
        <Combo label="标注样式" value="ISO-25" width="w-[120px]" pad="pl-4" />
        <Divider />
        <IconButton icon="tableStyle" label="表格样式" />
        <Combo label="表格样式" value="Standard" width="w-[120px]" pad="pl-1" />
      </div>
    </div>

    <div className="mt-[3px] flex h-6 shrink-0 gap-[2px] overflow-hidden">
      <div className={bar}>
        <Grip />
        <Combo label="工作空间" value="AutoCAD 经典" width="w-[174px]" size="text-[11px]" />
        <IconButton icon="gear" label="工作空间设置" />
        <IconButton icon="space" label="我的工作空间" />
      </div>
      <div className={bar}>
        <Grip />
        <IconButton icon="layers" label="图层特性管理器" />
        <Combo
          label="图层"
          value="0"
          width="w-[299px]"
          pad="pl-1"
          lead={
            <span className="flex items-center">
              {["bulb", "sun", "freeze", "lockBlue"].map((name) => (
                <span key={name} className="flex w-[17px] justify-center"><Icon name={name} /></span>
              ))}
              <Swatch />
            </span>
          }
        />
        <IconButton icon="layerIso" label="将对象的图层置为当前" />
        <IconButton icon="layerPrev" label="上一个图层" />
        <IconButton icon="layerState" label="图层状态管理器" />
      </div>
      <div className={`${bar} flex-1`}>
        <Grip />
        <Combo label="颜色" value="ByLayer" width="w-[149px]" pad="pl-1" lead={<Swatch />} />
        <Divider />
        <Combo label="线型" value="ByLayer" width="w-[159px]" pad="pl-1" lead={<span className="ml-1 h-px w-[60px] bg-black" />} />
        <Divider />
        <Combo label="线宽" value="ByLayer" width="w-[159px]" pad="pl-1" lead={<span className="ml-1 h-px w-[36px] bg-black" />} />
      </div>
    </div>
  </>
);

const SidePalette = ({ tools, children, className = "" }) => (
  <div className={`flex w-[25px] flex-col border-x border-[#333] bg-[#ebebee] ${className}`}>
    <Grip vertical />
    {tools.map(([icon, label]) => (
      <div key={icon} className="h-[22px] shrink-0">
        <IconButton icon={icon} label={label} className="w-full" />
      </div>
    ))}
    {children}
  </div>
);

const arrows = {
  up: "M1 6l4-4 4 4",
  down: "M1 3l4 4 4-4",
  left: "M6 1L2 5l4 4",
  right: "M4 1l4 4-4 4",
};

const ScrollButton = ({ dir, label }) => (
  <button
    type="button"
    aria-label={label}
    className="flex h-4 w-4 shrink-0 items-center justify-center rounded-[2px] border border-[#9db3e8] bg-[#c5d3fb]"
  >
    <svg width="10" height="9" viewBox="0 0 10 9" fill="none" stroke="#41598f" strokeWidth="2" aria-hidden="true">
      <path d={arrows[dir]} />
    </svg>
  </button>
);

const Compass = () => (
  <div className="absolute top-[6px] right-[7px] flex w-[110px] flex-col items-center gap-1">
    <svg width="110" height="116" viewBox="0 0 110 116" aria-label="ViewCube" className="font-['Noto_Sans_CJK_SC',sans-serif]">
      <circle cx="55" cy="55" r="40" fill="none" stroke="#363636" strokeWidth="8" />
      <rect x="36" y="36" width="38" height="38" fill="#b9b9ba" />
      <rect x="43" y="43" width="24" height="24" fill="#aeb0b5" />
      <g textAnchor="middle" fill="#bdbdbd" fontSize="14">
        <text x="55" y="19">北</text>
        <text x="55" y="103">南</text>
        <text x="13" y="60">西</text>
        <text x="96" y="60">东</text>
        <text x="55" y="62" fontSize="24" fill="#4b4c50">上</text>
      </g>
    </svg>
    <button
      type="button"
      className="flex h-[17px] w-[48px] items-center justify-between rounded-[4px] border border-[#77767b] bg-[#96959b] px-1 text-[11px] text-[#55545a]"
    >
      WCS
      <svg width="8" height="4" viewBox="0 0 8 4" fill="none" stroke="#b5b4ba" aria-hidden="true">
        <path d="M0 .5h8L4 4z" />
      </svg>
    </button>
  </div>
);

const DrawingArea = () => {
  const [angle, setAngle] = useState("151°");
  const [distance, setDistance] = useState("37.6039");

  return (
    <div className="relative min-h-0 min-w-0 flex-1 overflow-hidden bg-black">
      <svg className="absolute inset-0 h-full w-full" fill="none" aria-label="绘图区">
        <path d="M397.5 271.5v-203h203v203" stroke="#fff" />
        <path d="M467 197l133 74" stroke="#b5b5b5" />
        {/* polar arc and dimension preview */}
        <g stroke="#a8a8a8" strokeDasharray="1 3">
          <path d="M752.5 271a152 152 0 0 0-285-74" />
          <path d="M606 271.5h146" />
          <path d="M467 197l-24 43 132 74 25-43" />
        </g>
        <g fill="#6c6c6c">
          <rect x="441" y="238" width="4" height="3" />
          <rect x="574" y="313" width="3" height="3" />
          <rect x="751" y="270" width="3" height="3" />
          <rect x="465" y="194" width="3" height="3" />
        </g>
        <path d="M431 196.5h73M467.5 160v73" stroke="#fff" />
        {/* UCS icon */}
        <path d="M400.5 460v45M405 510.5h46M396.5 505.5h8v8h-8z" stroke="#fff" />
        <g fill="#e8e8e8" fontSize="18" className="font-['Liberation_Sans',sans-serif]">
          <text x="402" y="456">Y</text>
          <text x="455" y="509">X</text>
        </g>
        <path d="M468 197v17l4-4 4 9 3-1-4-9h5z" fill="#fff" stroke="#000" strokeWidth=".5" />
      </svg>

      <input
        aria-label="角度"
        value={angle}
        onChange={(e) => setAngle(e.target.value)}
        className="absolute top-[117px] left-[619px] h-[15px] w-10 bg-[#9b9b9b] pl-px font-['Liberation_Mono',monospace] text-[10px] text-black outline-none"
      />
      <div className="absolute top-[214px] left-[484px] flex h-[18px] w-[105px] items-center justify-between bg-[#9b9b9b] pr-[3px] text-xs text-black">
        指定下一点或
        <button type="button" aria-label="选项" className="flex h-[11px] w-[11px] items-center justify-center border-r-2 border-b-2 border-[#2a2c8c] bg-[#ececf6]">
          <svg width="7" height="8" viewBox="0 0 7 8" aria-hidden="true">
            <path d="M3.5 6L1 3h1.8V0h1.4v3H6zM1 7h5v1H1z" />
          </svg>
        </button>
      </div>
      <div className="absolute top-[271px] left-[483px] flex h-[15px] w-[52px] items-center bg-white">
        <input
          aria-label="距离"
          value={distance}
          onChange={(e) => setDistance(e.target.value)}
          className="h-[13px] w-[44px] bg-[#2f62b5] pl-px font-['Liberation_Mono',monospace] text-[10px] text-white outline-none"
        />
      </div>
      <Compass />
    </div>
  );
};

const sheetArrows = ["M1 1v8M8 1v8L3 5z", "M8 1v8L3 5z", "M2 1v8l5-4z", "M2 1v8l5-4zM9 1v8"];
const sheetLabels = ["第一个布局", "上一个布局", "下一个布局", "最后一个布局"];

const Slash = () => (
  <svg width="7" height="16" viewBox="0 0 7 16" stroke="#444" aria-hidden="true">
    <path d="M6.5 1L.5 15" />
  </svg>
);

const LayoutTabs = () => (
  <div className="flex h-[17px] shrink-0 items-center bg-[#ece9d8] text-xs text-black">
    {sheetArrows.map((d, i) => (
      <button key={d} type="button" aria-label={sheetLabels[i]} className="flex h-[15px] w-[14px] items-center justify-center border-r border-[#b8b6a8] bg-[#e6e4d6]">
        <svg width="10" height="10" viewBox="0 0 10 10" fill="#a9a89c" stroke="#a9a89c" aria-hidden="true">
          <path d={d} />
        </svg>
      </button>
    ))}
    <button type="button" className="ml-[3px] flex h-full w-[43px] items-center justify-center bg-black font-bold text-white [clip-path:polygon(0_0,100%_0,calc(100%-7px)_100%,8px_100%)]">
      模型
    </button>
    <button type="button" className="pr-1 pl-[5px]">布局1</button>
    <Slash />
    <button type="button" className="pr-1 pl-[5px]">布局2</button>
    <Slash />
    <div className="ml-auto flex h-full w-[316px] items-center bg-[#f5f5f7]">
      <span className="mr-[2px] h-[13px] w-[5px] border border-[#bbb9a8] bg-[#ece9d8]" />
      <ScrollButton dir="left" label="向左滚动" />
      <div className="flex h-full flex-1 justify-center">
        <div className="h-4 w-4 self-center rounded-[2px] border border-[#9db3e8] bg-[#c5d3fb] bg-[repeating-linear-gradient(90deg,#8fa5dc_0_1px,transparent_1px_3px)] bg-[length:9px_7px] bg-center bg-no-repeat" />
      </div>
      <ScrollButton dir="right" label="向右滚动" />
    </div>
  </div>
);

const CommandLine = () => {
  const [command, setCommand] = useState("");

  return (
    <section className="mt-1 flex h-[57px] shrink-0 border border-[#4d4d4d] font-['Liberation_Mono','Noto_Sans_CJK_SC',monospace] text-[13px] text-black">
      <div className="flex w-[22px] shrink-0 flex-col items-center justify-between bg-gradient-to-b from-[#8e8e8e] to-[#454545] pt-1 pb-1">
        <div className="h-[5px] w-[17px] bg-[radial-gradient(#c4c4c4_40%,transparent_50%)] bg-[length:3px_3px]" />
        <button type="button" aria-label="关闭命令行">
          <svg width="9" height="9" viewBox="0 0 9 9" stroke="#f4f4f4" strokeWidth="2" aria-hidden="true">
            <path d="M1 1l7 7M8 1L1 8" />
          </svg>
        </button>
        <button type="button" aria-label="自定义">
          <svg width="15" height="15" viewBox="0 0 15 15" aria-hidden="true">
            <path d="M6 6l7 7" stroke="#f4f4f4" strokeWidth="3" />
            <path d="M1 3l3 2 1.5-1.5L3.5 1C7-.5 9.5 2 8 5.5S2.5 9 1 3z" fill="#f4f4f4" />
          </svg>
        </button>
      </div>
      <div className="flex min-w-0 flex-1 flex-col">
        <p className="flex h-[33px] items-end border-b border-[#777] bg-[#c7c7c7] pl-[2px] whitespace-pre">指定下一点或 [闭合(C)/放弃(U)]: @0,-50</p>
        <div className="flex flex-1 items-center bg-white pl-1 whitespace-pre">
          <Icon name="line" />
          <Caret label="最近使用的命令" className="w-[12px]" color="#888" />
          <label htmlFor="command" className="pl-px">
            <b>LINE</b> 指定下一点或 [
          </label>
          <button type="button" className="rounded-[3px] bg-[#d3d3d3]">闭合(<span className="text-[#1f14a8]">C</span>)</button>
          <button type="button" className="ml-[6px] rounded-[3px] bg-[#d3d3d3]">放弃(<span className="text-[#1f14a8]">U</span>)</button>
          ]:
          <input id="command" value={command} onChange={(e) => setCommand(e.target.value)} className="min-w-0 flex-1 pl-2 outline-none" />
        </div>
      </div>
    </section>
  );
};

const cell = "border-l border-[#5f5f5f] bg-gradient-to-b from-[#b9b9b9] to-[#989898]";

const StatusBar = () => (
  <footer className="flex h-6 shrink-0 items-stretch border-t border-[#1f1f1f] bg-gradient-to-b from-[#6c6c6c] to-[#7c7c7c] text-xs text-black">
    <output className="flex w-[199px] shrink-0 items-center bg-gradient-to-r from-[#676767] to-[#7d7d7d] pl-[11px] font-['Liberation_Mono',monospace] text-[10px] whitespace-pre text-[#a4a4a4]">
      {"-0.6019,  58.6505 , 0.0000"}
    </output>
    {toggles.map(([icon, label, on]) => (
      <button
        key={icon}
        type="button"
        aria-label={label}
        aria-pressed={Boolean(on)}
        className={`flex w-[22px] shrink-0 items-center justify-center border-l border-[#5f5f5f] bg-gradient-to-b ${
          on ? "from-[#a9bfc6] to-[#bfe9f2]" : "from-[#b9b9b9] to-[#989898]"
        }`}
      >
        <Icon name={icon} />
      </button>
    ))}
    <div className="flex-1" />
    <button type="button" className={`w-[30px] shrink-0 ${cell}`}>模型</button>
    <IconButton icon="modelView" label="快速查看布局" className={`w-[22px] ${cell}`} />
    <IconButton icon="quickView" label="快速查看图形" className={`w-[22px] ${cell}`} />
    <button type="button" className={`ml-[18px] flex w-[54px] shrink-0 items-center gap-[2px] pl-px font-['Liberation_Mono',monospace] text-[10px] ${cell}`}>
      <Icon name="anno" />
      1:1
      <svg width="8" height="5" viewBox="0 0 8 5" aria-hidden="true">
        <path d="M0 0h8L4 5z" />
      </svg>
    </button>
    <IconButton icon="annoVis" label="注释可见性" className={`w-[22px] ${cell}`} />
    <IconButton icon="annoAuto" label="自动缩放" className={`w-[22px] ${cell}`} />
    <IconButton icon="gear" label="切换工作空间" className={`ml-[6px] w-[22px] ${cell}`} />
    <IconButton icon="lockOpen" label="锁定界面" className={`w-[22px] ${cell}`} />
    <IconButton icon="accel" label="硬件加速" className={`w-[22px] ${cell}`} />
    <button type="button" aria-label="隔离对象" className="flex w-[37px] shrink-0 items-center justify-center border-l border-[#555] bg-[#777]">
      <span className="flex h-[18px] w-6 items-center justify-center border border-[#444] bg-[#aaa]">
        <Icon name="bulb" />
      </span>
    </button>
    <Caret label="状态栏菜单" className={`w-[11px] ${cell}`} color="#111" />
    <IconButton icon="clean" label="全屏显示" className={`w-[22px] ${cell}`} />
    <div className="flex w-4 shrink-0 items-end justify-end pb-px">
      <svg width="12" height="12" viewBox="0 0 12 12" fill="#bbb" aria-hidden="true">
        <path d="M9 1h2v2h-2zM9 5h2v2h-2zM9 9h2v2h-2zM5 5h2v2h-2zM5 9h2v2h-2zM1 9h2v2h-2z" />
      </svg>
    </div>
  </footer>
);

export default function App() {
  return (
    <div className="h-screen overflow-hidden bg-[#1f1f1f] pt-[2px] pr-px pl-[2px] font-['Liberation_Sans','Noto_Sans_CJK_SC',sans-serif]">
      <div className="flex h-full flex-col bg-[#636363]">
        <TitleBar />
        <div className="flex min-h-0 flex-1 flex-col pr-[5px] pl-[3px]">
          <FileTabs />
          <Toolbars />
          <main className="mt-[5px] flex min-h-0 flex-1">
            <SidePalette tools={drawTools} className="self-start border-b" />
            <div className="ml-1 flex min-w-0 flex-1 flex-col border-t border-l border-[#a0a0a0]">
              <div className="flex min-h-0 flex-1">
                <DrawingArea />
                <div className="flex w-5 shrink-0 flex-col items-center bg-gradient-to-r from-[#ececee] to-white py-px">
                  <ScrollButton dir="up" label="向上滚动" />
                  <div className="mt-[37px] h-[17px] w-4 rounded-[2px] border border-[#9db3e8] bg-[#c5d3fb] bg-[repeating-linear-gradient(#8fa5dc_0_1px,transparent_1px_3px)] bg-[length:8px_9px] bg-center bg-no-repeat" />
                  <div className="flex-1" />
                  <ScrollButton dir="down" label="向下滚动" />
                </div>
              </div>
              <div className="bg-[#ece9d8] pr-5">
                <LayoutTabs />
              </div>
            </div>
            <div className="mr-[2px] ml-[3px] flex min-h-0 flex-col gap-[3px] overflow-hidden">
              <SidePalette tools={modifyTools} className="shrink-0" />
              <SidePalette tools={orderTools} className="min-h-0 flex-1 overflow-hidden">
                <div className="mx-1 my-[2px] h-px shrink-0 bg-[#b5b5b5]" />
                <div className="h-[22px] shrink-0">
                  <IconButton icon="abc" label="注释前置" className="w-full" />
                </div>
                <div className="h-[22px] shrink-0">
                  <IconButton icon="hatchBack" label="图案填充后置" className="w-full" />
                </div>
              </SidePalette>
            </div>
          </main>
          <CommandLine />
          <StatusBar />
        </div>
      </div>
    </div>
  );
}
